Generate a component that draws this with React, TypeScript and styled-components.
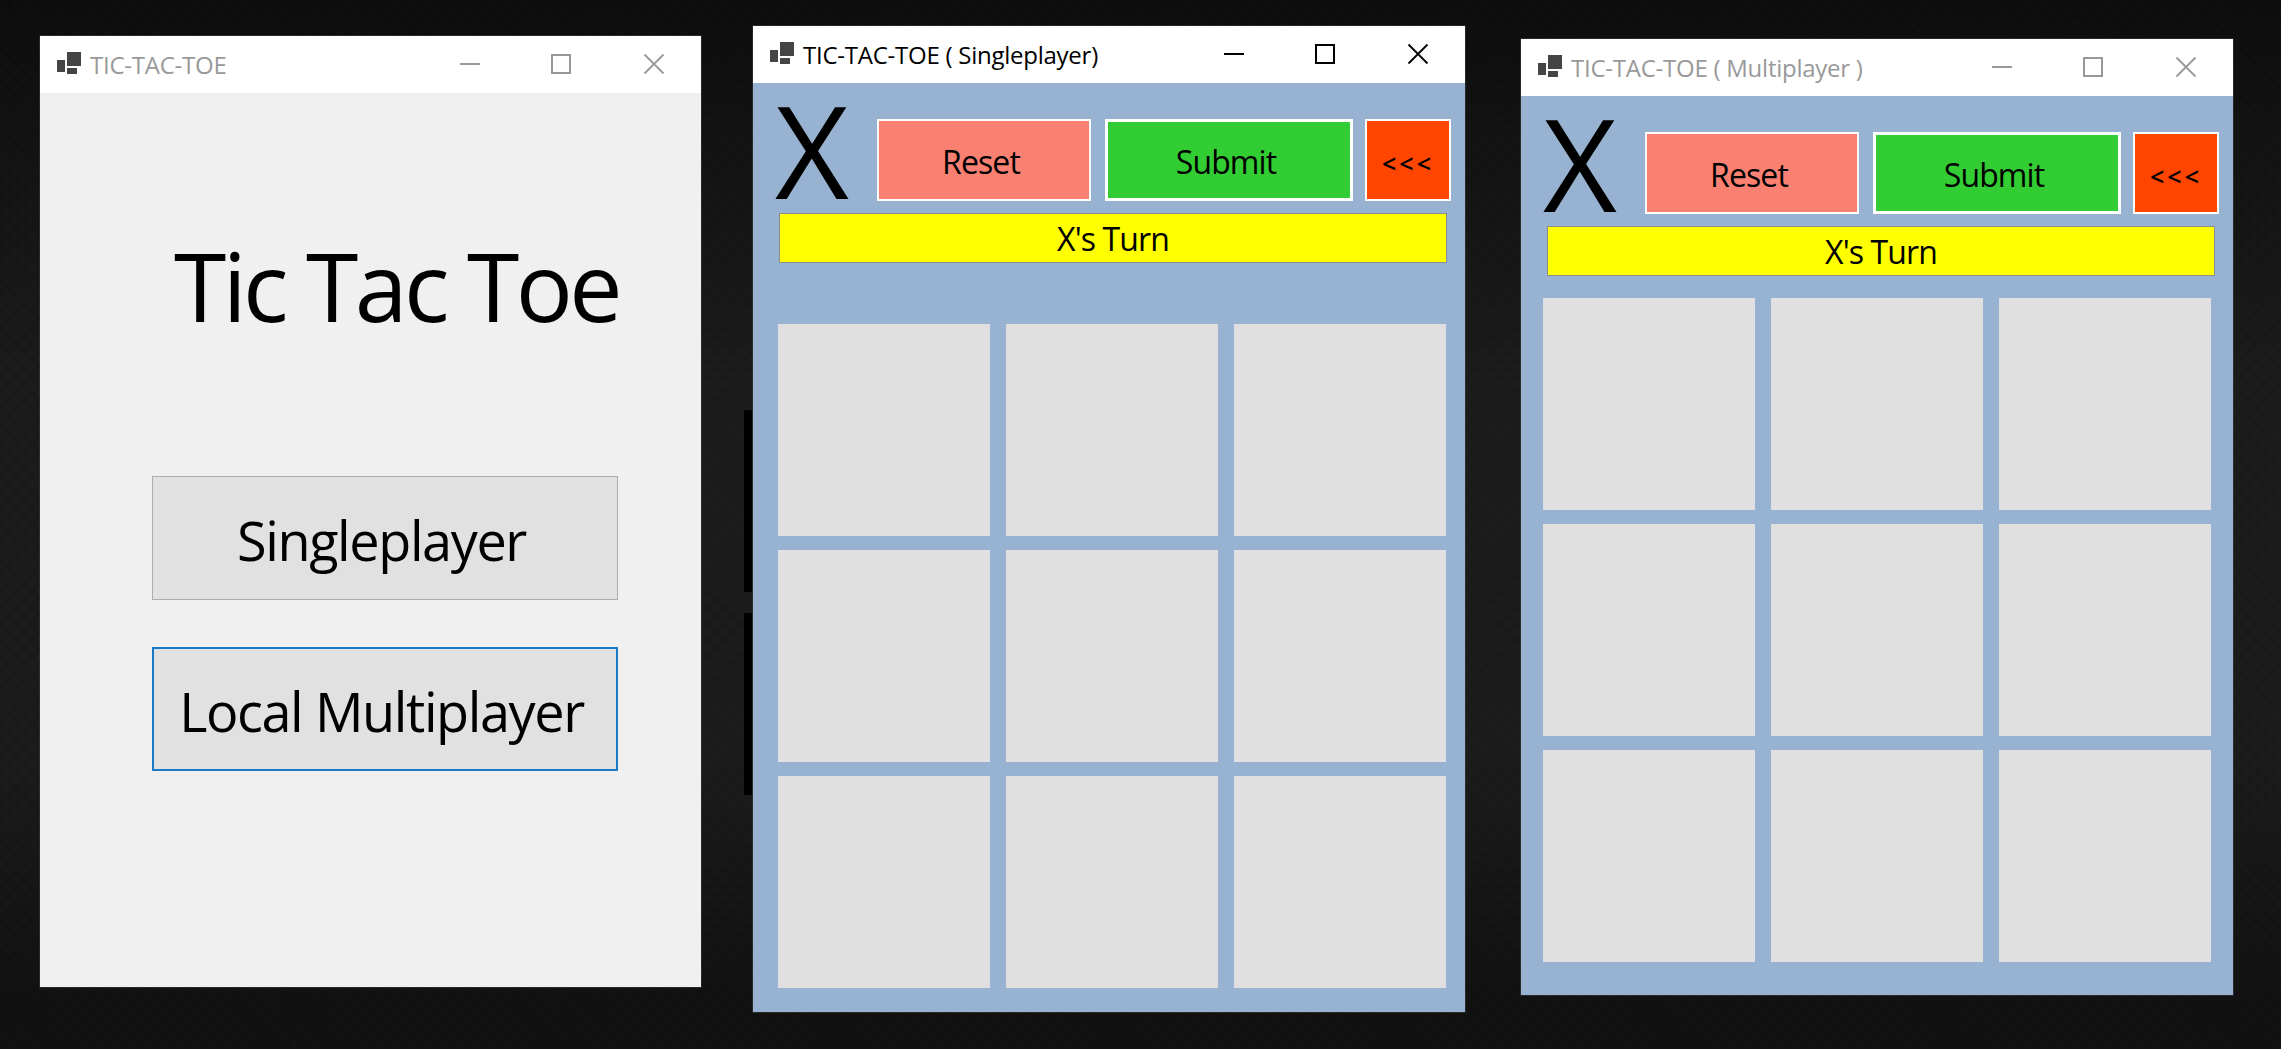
import React from "react";
import styled, { createGlobalStyle } from "styled-components";

const GlobalStyle = createGlobalStyle`
  html, body { margin: 0; padding: 0; height: 100%; background: #111; }
  #root { height: 100%; }
  * { box-sizing: border-box; }
`;

const FONT = `"Open Sans", "Noto Sans", "Liberation Sans", sans-serif`;

const Desktop = styled.div`
  position: relative;
  width: 2281px;
  height: 1049px;
  overflow: hidden;
  background-color: #121212;
  background-image:
    repeating-linear-gradient(45deg, rgba(255,255,255,0.014) 0 1px, transparent 1px 2px),
    repeating-linear-gradient(-45deg, rgba(0,0,0,0.14) 0 1px, transparent 1px 2px),
    linear-gradient(180deg, #0c0c0c 0, #1b1b1b 380px, #1b1b1b 760px, #101010 1000px);
  font-family: ${FONT};
`;

const Win = styled.section<{ $x: number; $y: number; $w: number; $h: number; $bg: string }>`
  position: absolute;
  left: ${(p) => p.$x}px;
  top: ${(p) => p.$y}px;
  width: ${(p) => p.$w}px;
  height: ${(p) => p.$h}px;
  background: ${(p) => p.$bg};
  box-shadow: 0 0 0 1px rgba(60, 60, 60, 0.55);
  display: flex;
  flex-direction: column;
`;

const TitleBar = styled.header<{ $active?: boolean }>`
  flex: 0 0 57px;
  height: 57px;
  background: #fff;
  display: flex;
  align-items: center;
  padding-left: 17px;
  color: ${(p) => (p.$active ? "#000" : "#999")};
`;

const TitleText = styled.span`
  margin-left: 8px;
  font-size: 24px;
  letter-spacing: -0.25px;
  line-height: 57px;
  white-space: nowrap;
  flex: 1;
`;

const AppIconSvg = styled.svg`
  display: block;
  position: relative;
  top: -1px;
`;

const Controls = styled.div`
  display: grid;
  grid-template-columns: 90px 92px 94px;
`;

const Control = styled.div`
  height: 57px;
  display: flex;
  align-items: center;
  justify-content: center;
  position: relative;
  top: -1px;
`;

const AppIcon = () => (
  <AppIconSvg width="25" height="23" viewBox="0 0 25 23" fill="#454545">
    <rect x="10" y="0" width="14" height="14" />
    <rect x="0" y="8" width="8" height="12" />
    <rect x="10" y="16" width="10" height="6" />
  </AppIconSvg>
);

const WinControls = () => (
  <Controls>
    <Control>
      <svg width="22" height="22" viewBox="0 0 22 22" stroke="currentColor" strokeWidth="2" fill="none">
        <path d="M1 11h20" />
      </svg>
    </Control>
    <Control>
      <svg width="22" height="22" viewBox="0 0 22 22" stroke="currentColor" strokeWidth="2" fill="none">
        <rect x="2" y="2" width="18" height="18" />
      </svg>
    </Control>
    <Control>
      <svg width="22" height="22" viewBox="0 0 22 22" stroke="currentColor" strokeWidth="1.8" fill="none">
        <path d="M1.5 1.5l19 19M20.5 1.5l-19 19" />
      </svg>
    </Control>
  </Controls>
);

const MenuBody = styled.div`
  flex: 1;
  display: flex;
  flex-direction: column;
  padding-left: 112px;
`;

const Heading = styled.h1`
  margin: 127px 0 0 22px;
  font-size: 95px;
  font-weight: 400;
  letter-spacing: -3.6px;
  line-height: 130px;
  color: #000;
  white-space: nowrap;
`;

const MenuButton = styled.button<{ $focused?: boolean }>`
  display: block;
  width: 466px;
  height: 124px;
  margin-top: ${(p) => (p.$focused ? 47 : 126)}px;
  padding: 3px 7px 0 0;
  background: #e1e1e1;
  border: ${(p) => (p.$focused ? "2px solid #1a7ac6" : "1px solid #adadad")};
  font-family: ${FONT};
  font-size: 54px;
  letter-spacing: -1.4px;
  color: #000;
`;

const GameBody = styled.div`
  flex: 1;
  display: flex;
  flex-direction: column;
`;

const TopRow = styled.div`
  height: 118px;
  display: flex;
  align-items: flex-end;
  padding-left: 23px;
`;

const Mark = styled.div`
  align-self: flex-start;
  margin-top: -19px;
  margin-left: -1px;
  font-size: 128px;
  line-height: 172px;
  height: 118px;
  flex: 0 0 102px;
  font-weight: 400;
  color: #000;
`;

const ActionButton = styled.button<{ $w: number; $bg: string; $bw: number; $gap: number; $pad: number }>`
  width: ${(p) => p.$w}px;
  height: 82px;
  margin-right: ${(p) => p.$gap}px;
  padding: 3px ${(p) => p.$pad}px 0 0;
  background: ${(p) => p.$bg};
  border: ${(p) => p.$bw}px solid #fff;
  font-family: ${FONT};
  font-size: 32px;
  letter-spacing: -0.9px;
  line-height: 73px;
  color: #000;
`;

const BackGlyph = styled.span`
  font-size: 25px;
  font-weight: 600;
  letter-spacing: 3px;
`;

const Turn = styled.div`
  width: 668px;
  height: 50px;
  margin: 12px 0 0 26px;
  background: #ffff00;
  border: 1px solid #8d8d8d;
  font-size: 32px;
  letter-spacing: -0.9px;
  line-height: 50px;
  text-align: center;
  color: #000;
`;

const Board = styled.div<{ $top: number; $left: number }>`
  display: grid;
  grid-template-columns: repeat(3, 212px);
  grid-auto-rows: 212px;
  column-gap: 16px;
  row-gap: 14px;
  margin: ${(p) => p.$top}px 0 0 ${(p) => p.$left}px;
`;

const Cell = styled.button`
  padding: 0;
  border: 0;
  background: #e0e0e0;
`;

const Stripe = styled.div<{ $y: number; $h: number }>`
  position: absolute;
  left: 744px;
  top: ${(p) => p.$y}px;
  width: 8px;
  height: ${(p) => p.$h}px;
  background: #000;
`;

const Game = ({ title, active, top, left }: { title: string; active?: boolean; top: number; left: number }) => (
  <>
    <TitleBar $active={active}>
      <AppIcon />
      <TitleText>{title}</TitleText>
      <WinControls />
    </TitleBar>
    <GameBody>
      <TopRow>
        <Mark>X</Mark>
        <ActionButton $w={214} $bg="#fa8072" $bw={2} $gap={14} $pad={6}>Reset</ActionButton>
        <ActionButton $w={248} $bg="#32cd32" $bw={3} $gap={12} $pad={6}>Submit</ActionButton>
        <ActionButton $w={86} $bg="#ff4500" $bw={2} $gap={0} $pad={0}><BackGlyph>&lt;&lt;&lt;</BackGlyph></ActionButton>
      </TopRow>
      <Turn>X's Turn</Turn>
      <Board $top={top} $left={left}>
        {Array.from({ length: 9 }, (_, i) => <Cell key={i} />)}
      </Board>
    </GameBody>
  </>
);

export default function App() {
  return (
    <Desktop>
      <GlobalStyle />
      <Stripe $y={410} $h={182} />
      <Stripe $y={613} $h={182} />
      <Win $x={40} $y={36} $w={661} $h={951} $bg="#f0f0f0">
        <TitleBar>
          <AppIcon />
          <TitleText>TIC-TAC-TOE</TitleText>
          <WinControls />
        </TitleBar>
        <MenuBody>
          <Heading>Tic Tac Toe</Heading>
          <MenuButton>Singleplayer</MenuButton>
          <MenuButton $focused>Local Multiplayer</MenuButton>
        </MenuBody>
      </Win>
      <Win $x={753} $y={26} $w={712} $h={986} $bg="#98b3d1">
        <Game title="TIC-TAC-TOE ( Singleplayer)" active top={61} left={25} />
      </Win>
      <Win $x={1521} $y={39} $w={712} $h={956} $bg="#98b3d1">
        <Game title="TIC-TAC-TOE ( Multiplayer )" top={22} left={22} />
      </Win>
    </Desktop>
  );
}
